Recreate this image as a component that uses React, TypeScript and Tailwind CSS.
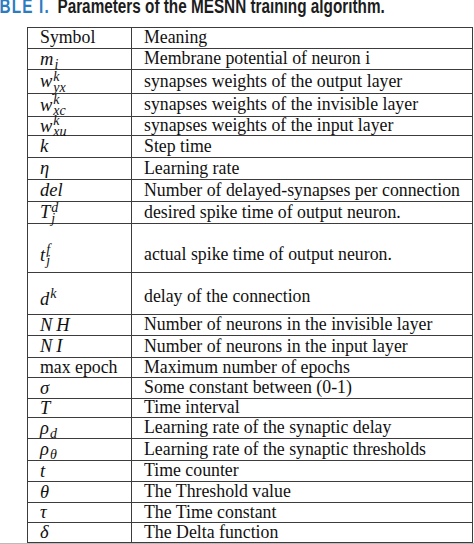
import React from "react";

type Row = { h: number; sym: React.ReactNode; text: string; tall?: boolean };

const I = ({ children }: { children: React.ReactNode }) => (
  <span className="italic text-[18.5px]">{children}</span>
);

const Script = ({ base, sup, sub }: { base: string; sup?: string; sub?: string }) => (
  <span className="inline-flex items-center">
    <span className="italic text-[18.5px]">{base}</span>
    <span className="inline-flex flex-col text-[14px] leading-[11px] italic ml-[1px]">
      <span className={sup ? "" : "invisible"}>{sup ?? "x"}</span>
      <span className={sub ? "" : "invisible"}>{sub ?? "x"}</span>
    </span>
  </span>
);

const Sub = ({ base, sub }: { base: string; sub: string }) => (
  <span className="italic text-[18.5px]">
    {base}
    <span className="text-[14px] relative top-[4px] ml-[1px]">{sub}</span>
  </span>
);

const Sup = ({ base, sup }: { base: string; sup: string }) => (
  <span className="italic text-[18.5px]">
    {base}
    <span className="text-[14px] relative top-[-7px] ml-[1px]">{sup}</span>
  </span>
);

const rows: Row[] = [
  { h: 21, sym: <span>Symbol</span>, text: "Meaning" },
  { h: 21, sym: <Sub base="m" sub="i" />, text: "Membrane potential of neuron i" },
  { h: 24, sym: <Script base="w" sup="k" sub="yx" />, text: "synapses weights of the output layer" },
  { h: 23, sym: <Script base="w" sup="k" sub="xc" />, text: "synapses weights of the invisible layer" },
  { h: 19, sym: <Script base="w" sup="k" sub="xu" />, text: "synapses weights of the input layer" },
  { h: 22, sym: <I>k</I>, text: "Step time" },
  { h: 22, sym: <I>η</I>, text: "Learning rate" },
  { h: 22, sym: <I>del</I>, text: "Number of delayed-synapses per connection" },
  { h: 22, sym: <Script base="T" sup="d" sub="j" />, text: "desired spike time of output neuron." },
  { h: 49, sym: <Script base="t" sup="f" sub="j" />, text: "actual spike time of output neuron.", tall: true },
  { h: 42, sym: <Sup base="d" sup="k" />, text: "delay of the connection", tall: true },
  { h: 21, sym: <span className="italic text-[18.5px] tracking-[4px]">NH</span>, text: "Number of neurons in the invisible layer" },
  { h: 22, sym: <span className="italic text-[18.5px] tracking-[4px]">NI</span>, text: "Number of neurons in the input layer" },
  { h: 20, sym: <span>max epoch</span>, text: "Maximum number of epochs" },
  { h: 21, sym: <I>σ</I>, text: "Some constant between (0-1)" },
  { h: 19, sym: <I>T</I>, text: "Time interval" },
  { h: 21, sym: <Sub base="ρ" sub="d" />, text: "Learning rate of the synaptic delay" },
  { h: 22, sym: <Sub base="ρ" sub="θ" />, text: "Learning rate of the synaptic thresholds" },
  { h: 21, sym: <I>t</I>, text: "Time counter" },
  { h: 21, sym: <I>θ</I>, text: "The Threshold value" },
  { h: 20, sym: <I>τ</I>, text: "The Time constant" },
  { h: 20, sym: <I>δ</I>, text: "The Delta function" },
];

export default function App() {
  return (
    <div className="w-[474px] h-[544px] bg-white overflow-hidden relative">
      <div
        className="whitespace-nowrap font-bold text-[20px] leading-[20px] -mt-[4px] -ml-[22px] text-[#1d1d1d] origin-left scale-x-[0.765]"
        style={{ fontFamily: '"Liberation Sans", Arial, sans-serif' }}
      >
        <span className="text-[#2b7cc0] tracking-[1.5px]">TABLE I.</span>
        <span className="ml-[10px]">Parameters of the MESNN training algorithm.</span>
      </div>
      <div
        className="mt-[11px] ml-[27px] w-[446px] border-t border-l border-r border-[#3c3c3c] text-[17.8px] text-[#111]"
        style={{ fontFamily: '"Liberation Serif", "Times New Roman", serif' }}
      >
        {rows.map((r, i) => (
          <div
            key={i}
            className="flex border-b border-[#3c3c3c]"
            style={{ height: r.h }}
          >
            <div
              className={`w-[104px] shrink-0 border-r border-[#3c3c3c] pl-[12px] flex leading-none ${
                r.tall ? "items-end pb-[6px]" : "items-center"
              }`}
            >
              {r.sym}
            </div>
            <div
              className={`flex-1 pl-[12px] flex leading-none whitespace-nowrap ${
                r.tall ? "items-end pb-[8px]" : "items-center"
              }`}
            >
              {r.text}
            </div>
          </div>
        ))}
      </div>
      <div className="h-[3px] bg-[#bbb]" />
    </div>
  );
}
